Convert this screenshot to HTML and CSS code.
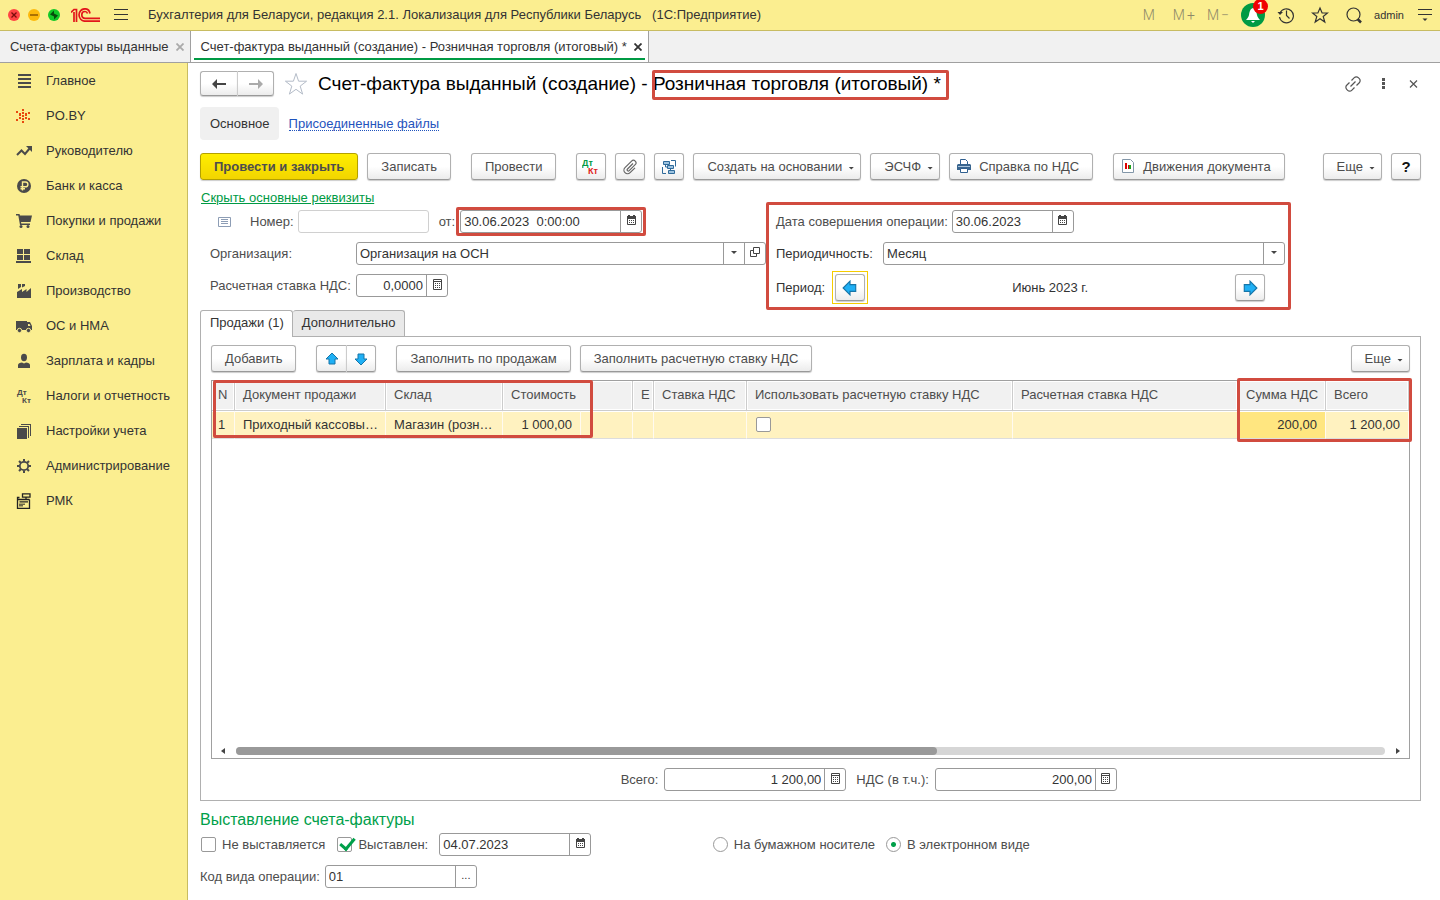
FILE: index.html
```html
<!DOCTYPE html>
<html lang="ru">
<head>
    <meta charset="UTF-8">
    <meta name="viewport" content="width=device-width, initial-scale=1.0">
    <title>Счет-фактура выданный (создание)</title>
    <link rel="stylesheet" href="styles.css">
</head>
<body>
    <!-- Общие иконки -->
    <svg class="sprite" aria-hidden="true">
        <symbol id="i-calendar" viewBox="0 0 11 11">
            <path d="M1.500 2.500h8v7h-8z" fill="none" stroke="#444"/>
            <path d="M1 1h9v3H1zM2 0h2v2H2zM7 0h2v2H7z" fill="#444"/>
            <path d="M3 5h1v1H3zM5 5h1v1H5zM7 5h1v1H7zM3 7h1v1H3zM5 7h1v1H5zM7 7h1v1H7z" fill="#444"/>
        </symbol>
        <symbol id="i-calc" viewBox="0 0 11 11">
            <path d="M1.500.5h8v10h-8zM1.500 2.500h8" fill="none" stroke="#444"/>
            <path d="M3 4h1v1H3zM5 4h1v1H5zM7 4h1v1H7zM3 6h1v1H3zM5 6h1v1H5zM7 6h1v1H7zM3 8h1v1H3zM5 8h1v1H5zM7 8h1v1H7z" fill="#444"/>
        </symbol>
        <symbol id="i-arrow" viewBox="0 0 14 14">
            <path d="M1 7l6-6v3h5v6H7v3z" fill="#1fb0f5" stroke="#1675a8"/>
        </symbol>
    </svg>

    <header class="topbar">
        <div class="dots">
            <svg width="52" height="12" viewBox="0 0 52 12">
                <circle cx="6" cy="6" r="6" fill="#f44"/>
                <path d="M3.500 3.500l5 5M8.500 3.500l-5 5" stroke="#7a0d0d" stroke-width="1.300"/>
                <circle cx="26" cy="6" r="6" fill="#fdb90d"/>
                <path d="M22 6h8" stroke="#8f5a00" stroke-width="1.500"/>
                <circle cx="46" cy="6" r="6" fill="#12c928"/>
                <path d="M46 1.500v6l-4-2zM46 10.500v-6l4 2z" fill="#064d0d"/>
            </svg>
        </div>
        <svg class="logo" width="29" height="14" viewBox="0 0 29 14" fill="none" stroke="#e2151b" stroke-width="1.700">
            <path d="M0 4.500L3 1.500h2.500V14M3 4v10"/>
            <path d="M19 5.500C18.500 2.500 16.500.8 14 .8c-3.500 0-6 2.700-6 6s2.500 6.400 6 6.400h15"/>
            <path d="M16.500 5.500c-.4-1.300-1.300-2-2.500-2-1.900 0-3.200 1.500-3.200 3.300 0 2 1.300 3.600 3.400 3.600H29"/>
        </svg>
        <button class="icon-btn burger" aria-label="Меню">
            <svg width="14" height="12" viewBox="0 0 14 12" stroke="#333"><path d="M0 .5h14M0 5.500h14M0 10.500h14"/></svg>
        </button>
        <div class="app-title">Бухгалтерия для Беларуси, редакция 2.1. Локализация для Республики Беларусь &nbsp; (1С:Предприятие)</div>
        <div class="tools">
            <div class="memory">
                <button>M</button>
                <button>M<span>+</span></button>
                <button>M<span>−</span></button>
            </div>
            <button class="icon-btn bell" aria-label="Оповещения">
                <svg width="24" height="24" viewBox="0 0 24 24">
                    <circle cx="12" cy="12" r="12" fill="#009a44"/>
                    <path d="M12 5c-3 1-3.500 4-4 7-.3 2-1.500 3-3 5h14c-1.500-2-2.700-3-3-5-.5-3-1-6-4-7zM10 18h4l-2 2z" fill="#fff"/>
                </svg>
                <span class="badge">1</span>
            </button>
            <button class="icon-btn" aria-label="История">
                <svg width="18" height="18" viewBox="0 0 18 18" fill="none" stroke="#333" stroke-width="1.200"><path d="M3 7a7 7 0 1 1-.5 4M9.500 4.500v5l3 3"/><path d="M.5 6L3 9l3-3z" fill="#333" stroke="none"/></svg>
            </button>
            <button class="icon-btn" aria-label="Избранное">
                <svg width="18" height="18" viewBox="0 0 18 18" fill="none" stroke="#333" stroke-width="1.200"><path d="M9 2l2.100 5H16.500l-4.300 3.500 1.600 5.500L9 12.800 4.200 16l1.600-5.500L1.500 7h5.400z"/></svg>
            </button>
            <button class="icon-btn" aria-label="Поиск">
                <svg width="18" height="18" viewBox="0 0 18 18" fill="none" stroke="#333"><circle cx="8.500" cy="8.500" r="6.500" stroke-width="1.200"/><path d="M12.500 13l3.500 3.500" stroke-width="2.500"/></svg>
            </button>
            <a class="user" href="#">admin</a>
            <button class="icon-btn" aria-label="Сервис">
                <svg width="14" height="14" viewBox="0 0 14 14" stroke="#333"><path d="M0 1.500h14M0 6.500h14"/><path d="M4.500 10.500h5L7 13z" fill="#333" stroke="none"/></svg>
            </button>
        </div>
    </header>

    <nav class="windows">
        <div class="win">
            <a href="#">Счета-фактуры выданные</a>
            <button class="win-close" aria-label="Закрыть"><svg width="8" height="8" viewBox="0 0 8 8" stroke="#aaa" stroke-width="1.800"><path d="M.5.5l7 7M7.500.5l-7 7"/></svg></button>
        </div>
        <div class="win active">
            <a href="#">Счет-фактура выданный (создание) - Розничная торговля (итоговый) *</a>
            <button class="win-close" aria-label="Закрыть"><svg width="8" height="8" viewBox="0 0 8 8" stroke="#333" stroke-width="1.800"><path d="M.5.5l7 7M7.500.5l-7 7"/></svg></button>
        </div>
    </nav>

    <div class="layout">
        <nav class="sidebar">
            <a href="#"><svg viewBox="0 0 16 16" fill="#4a4a4a"><path d="M2 1h13v2H2zM2 5h13v2H2zM2 9h13v2H2zM2 13h13v2H2z"/></svg>Главное</a>
            <a href="#"><svg viewBox="0 0 16 16" fill="#e8490f"><path d="M6 1h2v2H6zM6 4h2v2H6zM6 7h2v2H6zM6 10h2v2H6zM6 13h2v2H6zM3 5h2v2H3zM3 9h2v2H3zM9 5h2v2H9zM9 9h2v2H9zM0 3h2v2H0zM0 11h2v2H0zM12 4h2v2h-2zM12 10h2v2h-2zM3 7h2v1H3zM9 7h2v1H9z"/></svg>PO.BY</a>
            <a href="#"><svg viewBox="0 0 16 16"><path d="M1 12l4.500-4.500 3.500 3.500L14 5" fill="none" stroke="#4a4a4a" stroke-width="2"/><path d="M10 3h6v6z" fill="#4a4a4a"/></svg>Руководителю</a>
            <a href="#"><svg viewBox="0 0 16 16"><circle cx="8" cy="8" r="7" fill="#4a4a4a"/><path d="M6.500 12.500V4h3a2.300 2.300 0 0 1 0 4.800H4.500M4.500 10.700H9" fill="none" stroke="#fbee90" stroke-width="1.400"/></svg>Банк и касса</a>
            <a href="#"><svg viewBox="0 0 16 16" fill="#4a4a4a"><path d="M0 1h3.500l.5 1.500h12L14.500 9H5l.3 1.500H14V12H4L2.300 2.500H0z"/><circle cx="5" cy="13.500" r="1.500"/><circle cx="12" cy="13.500" r="1.500"/></svg>Покупки и продажи</a>
            <a href="#"><svg viewBox="0 0 16 16" fill="#4a4a4a"><path d="M1 1h6v5H1zM8 1h6v5H8zM1 7h6v5H1zM8 7h6v5H8zM0 13h15v2H0z"/></svg>Склад</a>
            <a href="#"><svg viewBox="0 0 16 16" fill="#4a4a4a"><path d="M1 15V9l5-3v3l4.500-3v3L15 5v10zM2 1h3v3L2 6zM6 1h3v2L6 4.500z"/></svg>Производство</a>
            <a href="#"><svg viewBox="0 0 16 16" fill="#4a4a4a"><path d="M0 3h11v9H0z"/><path d="M11 4h3l2 4v4h-5z"/><path d="M12 6h1.500l1 2H12z" fill="#fbee90"/><circle cx="3.500" cy="12.500" r="2.200" stroke="#fbee90"/><circle cx="12.500" cy="12.500" r="2.200" stroke="#fbee90"/></svg>ОС и НМА</a>
            <a href="#"><svg viewBox="0 0 16 16" fill="#4a4a4a"><ellipse cx="8" cy="4.500" rx="3" ry="3.700"/><path d="M2 15v-3c0-1.500 2-2.300 4-2.500l2 1 2-1c2 .2 4 1 4 2.500v3z"/></svg>Зарплата и кадры</a>
            <a href="#"><svg viewBox="0 0 16 16" class="dk"><text x="1" y="7">Дт</text><text x="6" y="15">Кт</text></svg>Налоги и отчетность</a>
            <a href="#"><svg viewBox="0 0 16 16" fill="#4a4a4a"><path d="M1 5h10v11H1zM3 3h10v12h-1V4H3zM5 1h10v12h-1V2H5z"/></svg>Настройки учета</a>
            <a href="#"><svg viewBox="0 0 16 16" fill="none" stroke="#4a4a4a"><circle cx="8" cy="8" r="4.200" stroke-width="1.800"/><path d="M8 1v2.500M8 12.500V15M1 8h2.500M12.500 8H15M3 3l2 2M11 11l2 2M3 13l2-2M11 5l2-2" stroke-width="2"/></svg>Администрирование</a>
            <a href="#"><svg viewBox="0 0 16 16" fill="none" stroke="#222" stroke-width="1.300"><path d="M3.500 4.500h-2v11h12v-9M6.500.8h7.500v3.400H6.500zM10 4v2.500h3.500M1.500 6.500H10M3.500 8.800H12"/><path d="M4 10.500v3M6 10.500v3M8 10.500v1.500"/></svg>РМК</a>
        </nav>

        <main class="form">
            <div class="title-row">
                <div class="split">
                    <button class="btn" aria-label="Назад"><svg width="14" height="10" viewBox="0 0 14 10" fill="#444"><path d="M0 5l5-5v4h9v2H5v4z"/></svg></button>
                    <button class="btn" aria-label="Вперед"><svg width="14" height="10" viewBox="0 0 14 10" fill="#aaa"><path d="M14 5L9 0v4H0v2h9v4z"/></svg></button>
                </div>
                <button class="icon-btn" aria-label="В избранное"><svg width="24" height="24" viewBox="0 0 24 24" fill="#fff" stroke="#b4bcc8"><path d="M12 1.500l2.600 7.700h8l-6.400 4.900 2.400 8L12 17.300l-6.600 4.800 2.400-8L1.400 9.200h8z"/></svg></button>
                <h1>Счет-фактура выданный (создание) - <span class="mark mark-title">Розничная торговля (итоговый) *</span></h1>
                <div class="title-tools">
                    <button class="icon-btn" aria-label="Ссылка"><svg width="16" height="16" viewBox="0 0 16 16" fill="none" stroke="#555" stroke-width="1.200"><path d="M6.500 4.500l2.800-2.800a2.800 2.800 0 0 1 4 0l1 1a2.800 2.800 0 0 1 0 4L11.500 9.500M9.500 11.500l-2.800 2.800a2.800 2.800 0 0 1-4 0l-1-1a2.800 2.800 0 0 1 0-4l2.800-2.800M5.500 10.500l5-5"/></svg></button>
                    <button class="icon-btn" aria-label="Еще"><svg width="16" height="12" viewBox="0 0 16 12" fill="#555"><path d="M7 0h3v3H7zM7 4h3v3H7zM7 8h3v3H7z"/></svg></button>
                    <button class="icon-btn" aria-label="Закрыть"><svg width="16" height="8" viewBox="0 0 16 8" stroke="#555" stroke-width="1.200"><path d="M5 .5l7 7M12 .5l-7 7"/></svg></button>
                </div>
            </div>

            <div class="subnav">
                <a class="current" href="#">Основное</a>
                <a class="attached" href="#">Присоединенные файлы</a>
            </div>

            <div class="toolbar">
                <div class="group">
                    <button class="btn primary">Провести и закрыть</button>
                    <button class="btn">Записать</button>
                </div>
                <button class="btn">Провести</button>
                <div class="group">
                    <button class="btn square" aria-label="Дт Кт"><svg class="dk" width="18" height="18" viewBox="0 0 18 18"><text x="0" y="8" class="dk-green">Дт</text><text x="6" y="16" class="dk-red">Кт</text></svg></button>
                    <button class="btn square" aria-label="Файлы"><svg width="16" height="16" viewBox="0 0 16 16" fill="none" stroke="#666" stroke-width="1.200"><path d="M11 4.500L5.500 10a1.200 1.200 0 0 0 1.700 1.700l6-6a2.500 2.500 0 0 0-3.600-3.600L3 8.600a3.600 3.600 0 0 0 5.100 5.100L13 8.800"/></svg></button>
                    <button class="btn square" aria-label="Структура"><svg width="16" height="16" viewBox="0 0 16 16" fill="#9dc3e0" stroke="#2f6a9a"><path d="M2.500 2.500h6v3h-6zM6.500 6.500h6v3h-6zM7.500 11.500h6v3h-6z"/><path d="M4.500 5.500V8h2M9.500 9.500v2M10 1.500h4.500v6M5 14.500H1.500V8" fill="none"/></svg></button>
                    <button class="btn">Создать на основании<i class="caret"></i></button>
                    <button class="btn">ЭСЧФ<i class="caret"></i></button>
                    <button class="btn with-icon"><svg width="14" height="14" viewBox="0 0 14 14"><path d="M3.500 5V.5h5l2 2V5" fill="#fff" stroke="#2f5f8f"/><path d="M1 5h12l1 1v5H0V6z" fill="#39658f"/><path d="M1 7h12v1H1z" fill="#a9c4dc"/><path d="M3.500 9.500h7v4h-7z" fill="#fff" stroke="#2f5f8f"/></svg>Справка по НДС</button>
                </div>
                <button class="btn with-icon"><svg width="14" height="14" viewBox="0 0 14 14"><path d="M1.500.5h8l3 3v10h-11z" fill="#fff" stroke="#8296a8"/><path d="M4 4h2v6H4zM7 6h1v4H7z" fill="#e00000"/><path d="M8 6h2v4H8z" fill="#1ba01b"/></svg>Движения документа</button>
                <div class="group end">
                    <button class="btn more">Еще<i class="caret"></i></button>
                    <button class="btn square help">?</button>
                </div>
            </div>

            <a class="toggle" href="#">Скрыть основные реквизиты</a>

            <div class="details">
                <div class="col">
                    <div class="line">
                        <svg class="list-icon" width="13" height="10" viewBox="0 0 13 10" fill="none" stroke="#8d9db5"><path d="M.5.5h12v9H.5zM3 2.500h7M3 4.500h7M3 6.500h7"/></svg>
                        <label for="num">Номер:</label>
                        <div class="field w-num pale"><input id="num" type="text"></div>
                        <label class="from" for="date">от:</label>
                        <div class="mark mark-date">
                            <div class="field w-long"><input id="date" type="text" value="30.06.2023  0:00:00"><button aria-label="Выбрать дату"><svg width="11" height="11"><use href="#i-calendar"/></svg></button></div>
                        </div>
                    </div>
                    <div class="line">
                        <label class="wide" for="org">Организация:</label>
                        <div class="field grow">
                            <select id="org"><option>Организация на ОСН</option></select>
                            <span class="drop"><i class="caret"></i></span>
                            <button aria-label="Открыть"><svg width="11" height="11" viewBox="0 0 11 11" fill="none" stroke="#444"><path d="M3.500.5h6v6h-6zM3 3.500H.5v6h6V7"/></svg></button>
                        </div>
                    </div>
                    <div class="line">
                        <label class="wide" for="rate">Расчетная ставка НДС:</label>
                        <div class="field w-rate num"><input id="rate" type="text" value="0,0000"><button aria-label="Калькулятор"><svg width="11" height="11"><use href="#i-calc"/></svg></button></div>
                    </div>
                </div>
                <div class="col mark mark-period">
                    <div class="line">
                        <label for="opdate">Дата совершения операции:</label>
                        <div class="field w-date"><input id="opdate" type="text" value="30.06.2023"><button aria-label="Выбрать дату"><svg width="11" height="11"><use href="#i-calendar"/></svg></button></div>
                    </div>
                    <div class="line dark">
                        <label class="mid" for="freq">Периодичность:</label>
                        <div class="field grow">
                            <select id="freq"><option>Месяц</option></select>
                            <span class="drop"><i class="caret"></i></span>
                        </div>
                    </div>
                    <div class="line dark period">
                        <span>Период:</span>
                        <button class="btn square focused" aria-label="Предыдущий период"><svg width="16" height="16"><use href="#i-arrow"/></svg></button>
                        <span class="period-name">Июнь 2023 г.</span>
                        <button class="btn square" aria-label="Следующий период"><svg class="turn" width="16" height="16"><use href="#i-arrow"/></svg></button>
                    </div>
                </div>
            </div>

            <div class="tabs">
                <button class="tab active">Продажи (1)</button>
                <button class="tab">Дополнительно</button>
            </div>

            <section class="panel">
                <div class="toolbar">
                    <button class="btn">Добавить</button>
                    <div class="split">
                        <button class="btn" aria-label="Вверх"><svg class="up" width="14" height="14"><use href="#i-arrow"/></svg></button>
                        <button class="btn" aria-label="Вниз"><svg class="down" width="14" height="14"><use href="#i-arrow"/></svg></button>
                    </div>
                    <div class="group">
                        <button class="btn">Заполнить по продажам</button>
                        <button class="btn">Заполнить расчетную ставку НДС</button>
                    </div>
                    <div class="group end">
                        <button class="btn more">Еще<i class="caret"></i></button>
                    </div>
                </div>

                <div class="grid-box">
                    <table>
                        <colgroup>
                            <col class="c-n"><col class="c-doc"><col class="c-store"><col class="c-cost"><col class="c-gap"><col class="c-e"><col class="c-rate"><col class="c-use"><col class="c-calc"><col class="c-sum"><col class="c-total">
                        </colgroup>
                        <thead>
                            <tr>
                                <th class="n">N</th>
                                <th>Документ продажи</th>
                                <th>Склад</th>
                                <th colspan="2">Стоимость</th>
                                <th>Е</th>
                                <th>Ставка НДС</th>
                                <th>Использовать расчетную ставку НДС</th>
                                <th>Расчетная ставка НДС</th>
                                <th>Сумма НДС</th>
                                <th>Всего</th>
                            </tr>
                        </thead>
                        <tbody>
                            <tr>
                                <td class="n">1</td>
                                <td>Приходный кассовы…</td>
                                <td>Магазин (розн…</td>
                                <td class="sum">1 000,00</td>
                                <td></td>
                                <td></td>
                                <td></td>
                                <td><input type="checkbox" aria-label="Использовать расчетную ставку НДС"></td>
                                <td></td>
                                <td class="sum selected">200,00</td>
                                <td class="sum">1 200,00</td>
                            </tr>
                        </tbody>
                    </table>
                    <div class="frame frame-left"></div>
                    <div class="frame frame-right"></div>
                    <div class="scroll">
                        <svg width="4" height="6" viewBox="0 0 4 6" fill="#444"><path d="M4 0v6L0 3z"/></svg>
                        <div class="track"><div class="thumb"></div></div>
                        <svg width="4" height="6" viewBox="0 0 4 6" fill="#444"><path d="M0 0v6l4-3z"/></svg>
                    </div>
                </div>

                <div class="totals">
                    <label for="total">Всего:</label>
                    <div class="field w-long num"><input id="total" type="text" value="1 200,00"><button aria-label="Калькулятор"><svg width="11" height="11"><use href="#i-calc"/></svg></button></div>
                    <label class="vat" for="vat">НДС (в т.ч.):</label>
                    <div class="field w-long num"><input id="vat" type="text" value="200,00"><button aria-label="Калькулятор"><svg width="11" height="11"><use href="#i-calc"/></svg></button></div>
                </div>
            </section>

            <h2>Выставление счета-фактуры</h2>
            <div class="issue">
                <div class="line">
                    <label class="check"><input type="checkbox">Не выставляется</label>
                    <label class="check"><input type="checkbox" checked>Выставлен:</label>
                    <div class="field w-mid"><input type="text" value="04.07.2023" aria-label="Дата выставления"><button aria-label="Выбрать дату"><svg width="11" height="11"><use href="#i-calendar"/></svg></button></div>
                </div>
                <div class="line">
                    <label class="check"><input type="radio" name="kind">На бумажном носителе</label>
                    <label class="check"><input type="radio" name="kind" checked>В электронном виде</label>
                </div>
            </div>
            <div class="line code">
                <label for="code">Код вида операции:</label>
                <div class="field w-mid"><input id="code" type="text" value="01"><button class="dots-btn" aria-label="Выбрать">...</button></div>
            </div>
        </main>
    </div>
</body>
</html>
```

FILE: styles.css
```css
* {
    box-sizing: border-box;
}
body {
    margin: 0;
    min-height: 100vh;
    display: flex;
    flex-direction: column;
    font-family: "Liberation Sans", Arial, sans-serif;
    font-size: 13px;
    line-height: 15px;
    color: #4d4d4d;
    background: #fff;
}
button, input, select {
    font: inherit;
    color: inherit;
    margin: 0;
}
button {
    padding: 0;
    border: 0;
    background: none;
    cursor: pointer;
}
a {
    color: inherit;
    text-decoration: none;
}
svg {
    display: block;
    flex: none;
}
.sprite {
    position: absolute;
    width: 0;
    height: 0;
}
.icon-btn {
    display: flex;
    align-items: center;
    justify-content: center;
}

/* Верхняя панель */
.topbar {
    display: flex;
    align-items: center;
    height: 31px;
    padding: 0 8px;
    background: #fbee90;
    border-bottom: 1px solid #c8bc62;
    color: #333;
}
.logo {
    margin-left: 11px;
}
.burger {
    margin-left: 14px;
}
.app-title {
    margin-left: 20px;
    padding-bottom: 1px;
    white-space: nowrap;
}
.tools {
    display: flex;
    align-items: center;
    gap: 16px;
    margin-left: auto;
}
.memory {
    display: flex;
    gap: 12px;
    margin-right: -4px;
    font-family: Roboto, sans-serif;
    font-size: 14px;
    font-weight: 300;
    color: #8d8868;
}
.memory button:first-child {
    margin-right: 6px;
}
.memory span {
    margin-left: 2px;
}
.bell {
    position: relative;
    margin-right: -4px;
}
.badge {
    position: absolute;
    top: -4px;
    right: -3px;
    width: 15px;
    height: 15px;
    border-radius: 50%;
    background: #f00000;
    color: #fff;
    font-size: 11px;
    font-weight: bold;
}
.user {
    font-size: 11px;
    margin: 0 -2px 0 -5px;
}

/* Открытые окна */
.windows {
    display: flex;
    height: 32px;
    background: #f1f1f1;
    border-bottom: 1px solid #a0a0a0;
}
.win {
    display: flex;
    align-items: center;
    gap: 7px;
    padding: 0 6px 0 10px;
    border-right: 1px solid #a0a0a0;
    color: #333;
    white-space: nowrap;
}
.win.active {
    background: linear-gradient(#009a44, #009a44) 3px 27px / calc(100% - 6px) 2px no-repeat #fff;
}

.layout {
    display: flex;
    flex: 1;
}
.sidebar {
    flex: none;
    width: 188px;
    background: #fbee90;
    border-right: 1px solid #c8bc62;
}
.sidebar a {
    display: flex;
    align-items: center;
    gap: 14px;
    height: 35px;
    padding-left: 16px;
    color: #333;
}
.sidebar svg {
    width: 16px;
    height: 16px;
}
.dk text {
    font-size: 8px;
    font-weight: bold;
    fill: #4a4a4a;
}
.btn .dk text {
    font-size: 9px;
}
.dk .dk-green {
    fill: #009a44;
}
.dk .dk-red {
    fill: #e02020;
}

/* Форма документа */
.form {
    flex: 1;
    min-width: 0;
    display: flex;
    flex-direction: column;
    padding: 8px 19px 12px 12px;
}
.title-row {
    display: flex;
    align-items: center;
    height: 25px;
}
.title-row > .icon-btn {
    margin: 0 10px;
}
h1 {
    margin: 0;
    font-size: 19px;
    line-height: 25px;
    font-weight: normal;
    color: #000;
    white-space: nowrap;
}
.title-tools {
    display: flex;
    gap: 14px;
    margin-left: auto;
}
.subnav {
    display: flex;
    align-items: center;
    gap: 10px;
    margin-top: 11px;
}
.current {
    padding: 9px 9px 9px 10px;
    border-radius: 4px;
    background: #f0f0f0;
    color: #333;
}
.attached {
    color: #1f53bd;
    border-bottom: 1px dotted #1f53bd;
    line-height: 13px;
}
.btn {
    display: flex;
    align-items: center;
    justify-content: center;
    height: 27px;
    padding: 0 13px 1px;
    border: 1px solid #b0b0b0;
    border-bottom-color: #999;
    border-radius: 3px;
    background: linear-gradient(#fff 50%, #ececec);
    box-shadow: 0 1px 1px #ccc;
    white-space: nowrap;
}
.primary {
    border-color: #b3a000;
    background: linear-gradient(#ffee00, #f2d500);
    font-weight: bold;
}
.square {
    width: 30px;
    padding: 0;
}
.with-icon {
    gap: 8px;
    padding-left: 7px;
}
.help {
    color: #111;
    font-size: 15px;
    font-weight: bold;
}
.caret {
    flex: none;
    width: 6px;
    height: 3px;
    background: #444;
    clip-path: polygon(0 0, 100% 0, 50% 100%);
}
.btn .caret {
    margin: 4px 0 0 6px;
}
.btn:has(.caret) {
    padding-right: 6px;
}
.split {
    display: flex;
}
.split .btn {
    width: 37px;
    padding: 0;
}
.toolbar .split .btn {
    width: 30px;
}
.title-row .btn {
    height: 25px;
}
.split .btn:first-child {
    border-right: 0;
    border-radius: 3px 0 0 3px;
}
.split .btn:last-child {
    border-left-color: #ccc;
    border-radius: 0 3px 3px 0;
}
.toolbar {
    display: flex;
    gap: 20px;
}
.form > .toolbar {
    margin-top: 13px;
}
.group {
    display: flex;
    gap: 9px;
}
.end {
    margin-left: auto;
}
.toggle {
    align-self: flex-start;
    margin: 10px 0 5px 1px;
    color: #009a44;
    text-decoration: underline;
}

/* Реквизиты */
.details {
    display: grid;
    grid-template-columns: 566fr 509fr 126fr;
    gap: 10px;
}
.col {
    display: flex;
    flex-direction: column;
    gap: 9px;
    min-width: 0;
}
.details .col:first-child {
    padding-left: 10px;
}
.line {
    display: flex;
    align-items: center;
    gap: 5px;
    min-height: 23px;
    white-space: nowrap;
}
.col .line {
    gap: 4px;
}
.dark {
    color: #333;
}
.list-icon {
    margin: 0 15px 0 8px;
}
.from {
    margin: 0 1px 0 6px;
}
.wide {
    width: 142px;
}
.mid {
    width: 103px;
}
.field {
    display: flex;
    height: 23px;
    border: 1px solid #999;
    border-radius: 3px;
    background: #fff;
    color: #333;
}
.pale {
    border-color: #d0d0d0;
}
.field input, .field select {
    flex: 1;
    min-width: 0;
    width: 0;
    padding: 0 3px;
    border: 0;
    outline: 0;
    background: transparent;
    appearance: none;
    white-space: pre;
}
.field button, .drop {
    display: flex;
    align-items: center;
    justify-content: center;
    flex: none;
    width: 21px;
    border-left: 1px solid #999;
    padding-bottom: 2px;
}
.field .dots-btn {
    font-size: 11px;
}
.field select {
    margin-right: -21px;
}
.drop {
    pointer-events: none;
}
.num input {
    text-align: right;
}
.grow {
    flex: 1;
}
.w-num {
    width: 131px;
}
.w-long {
    width: 182px;
}
.w-rate {
    width: 92px;
}
.w-date {
    width: 122px;
}
.w-mid {
    width: 152px;
}
.line.period {
    gap: 10px;
    padding-right: 20px;
}
.focused {
    position: relative;
}
.focused::after {
    content: "";
    position: absolute;
    inset: -4px;
    border: 1px solid #f5cc00;
}
.period-name {
    flex: 1;
    text-align: center;
}
.turn {
    transform: rotate(180deg);
}
.up {
    transform: rotate(90deg);
}
.down {
    transform: rotate(-90deg);
}

/* Красные рамки */
.mark {
    position: relative;
}
.mark::after, .frame {
    content: "";
    position: absolute;
    border: 3px solid #d14b3f;
    border-radius: 2px;
    pointer-events: none;
}
.mark-title::after {
    inset: -3px -8px -6px -1px;
}
.mark-date::after {
    inset: -3px -4px;
}
.mark-period::after {
    inset: -8px -6px -9px -10px;
}
.frame-left {
    top: -1px;
    left: 1px;
    width: 380px;
    height: 58px;
}
.frame-right {
    top: -3px;
    right: -3px;
    width: 175px;
    height: 64px;
}

/* Закладки и таблица */
.tabs {
    display: flex;
    margin-top: 9px;
}
.tab {
    height: 26px;
    padding: 0 9px 2px;
    border: 1px solid #b0b0b0;
    border-bottom: 0;
    border-radius: 3px 3px 0 0;
    background: #e9e9e9;
    color: #333;
}
.tab + .tab {
    border-left: 0;
}
.tab.active {
    position: relative;
    height: 27px;
    padding: 0 8px 3px 9px;
    margin-bottom: -1px;
    background: #fff;
}
.panel {
    flex: 1;
    display: flex;
    flex-direction: column;
    padding: 8px 10px 9px;
    border: 1px solid #b0b0b0;
}
.grid-box {
    position: relative;
    flex: 1;
    display: flex;
    flex-direction: column;
    margin-top: 8px;
    border: 1px solid #a0a0a0;
}
table {
    width: 100%;
    table-layout: fixed;
    border-collapse: separate;
    border-spacing: 0;
}
th, td {
    overflow: hidden;
    padding: 0 8px;
    text-align: left;
    font-weight: normal;
    white-space: nowrap;
}
th {
    height: 30px;
    padding: 0 4px 2px 8px;
    background: #f1f1f1;
    border-right: 1px solid #ccc;
    border-bottom: 1px solid #ccc;
    box-shadow: inset 0 0 0 1px #fff;
}
td {
    height: 28px;
    background: #fff2c0;
    border-right: 1px solid #fffaf0;
    border-bottom: 1px solid #ddd;
    box-shadow: inset 0 1px #fff;
    color: #333;
}
td:nth-child(2), td:nth-child(3) {
    padding-right: 4px;
}
th.n, td.n {
    padding-left: 6px;
    padding-right: 4px;
}
.sum {
    text-align: right;
}
.selected {
    background: #ffe680;
}
td input {
    display: block;
}
.c-n {
    width: 23px;
}
.c-doc {
    width: 151px;
}
.c-store {
    width: 117px;
}
.c-cost {
    width: 78px;
}
.c-gap {
    width: 52px;
}
.c-e {
    width: 21px;
}
.c-rate {
    width: 93px;
}
.c-use {
    width: 266px;
}
.c-sum {
    width: 88px;
}
.c-total {
    width: 83px;
}
.scroll {
    display: flex;
    align-items: center;
    gap: 11px;
    margin-top: auto;
    padding: 0 9px 3px;
}
.track {
    flex: 1;
    height: 8px;
    border-radius: 4px;
    background: #d6d6d6;
}
.thumb {
    width: 61%;
    height: 8px;
    border-radius: 4px;
    background: #999;
}
.totals {
    display: flex;
    align-items: center;
    gap: 6px;
    margin-top: 9px;
    padding-left: 34%;
}
.totals label:first-child {
    margin-left: 2px;
}
.vat {
    margin-left: 4px;
}

/* Выставление */
h2 {
    margin: 9px 0 4px;
    font-size: 16px;
    line-height: 19px;
    font-weight: normal;
    color: #00a04a;
}
.issue {
    display: grid;
    grid-template-columns: 42% 1fr;
}
.issue .line {
    gap: 11px;
}
.check {
    display: flex;
    align-items: center;
    gap: 6px;
}
input[type="checkbox"], input[type="radio"] {
    position: relative;
    flex: none;
    width: 15px;
    height: 15px;
    margin-left: 1px;
    border: 1px solid #999;
    border-radius: 2px;
    background: #fff;
    appearance: none;
}
input[type="radio"] {
    margin-left: 0;
    border-radius: 50%;
}
input[type="radio"]:checked {
    background: radial-gradient(circle, #00a04a 2px, #fff 3px);
}
input[type="checkbox"]:checked::after {
    content: "";
    position: absolute;
    left: 5px;
    top: -3px;
    width: 6px;
    height: 12px;
    border: solid #00a04a;
    border-width: 0 3px 3px 0;
    transform: rotate(40deg);
}
.code {
    margin-top: 9px;
}
```
